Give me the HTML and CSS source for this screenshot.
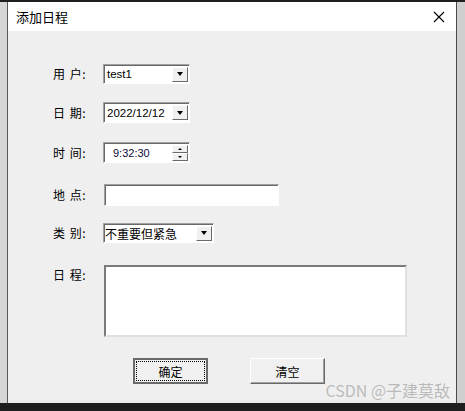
FILE: index.html
```html
<!DOCTYPE html>
<html lang="zh-CN">
<head>
    <meta charset="UTF-8">
    <title>添加日程</title>
    <link rel="stylesheet" href="styles.css">
</head>
<body>
    <div class="screen">
        <div class="side side-left"></div>

        <div class="dialog">
            <div class="titlebar">
                <span class="title">添加日程</span>
                <svg class="close" width="12" height="12" viewBox="0 0 12 12">
                    <path d="M1 1 L11 11 M11 1 L1 11" stroke="#000" stroke-width="1.1" fill="none"/>
                </svg>
            </div>

            <div class="dialog-body">
                <div class="row r-user">
                    <span class="label">用 户:</span>
                    <div class="field combo w-user">
                        <span class="value">test1</span>
                        <span class="drop"><i class="tri"></i></span>
                    </div>
                </div>

                <div class="row r-date">
                    <span class="label">日 期:</span>
                    <div class="field combo w-user">
                        <span class="value">2022/12/12</span>
                        <span class="drop"><i class="tri"></i></span>
                    </div>
                </div>

                <div class="row r-time">
                    <span class="label">时 间:</span>
                    <div class="field spin w-user">
                        <span class="value time">9:32:30</span>
                        <span class="spin-btns">
                            <span class="spin-btn"><i class="tri up"></i></span>
                            <span class="spin-btn"><i class="tri"></i></span>
                        </span>
                    </div>
                </div>

                <div class="row r-place">
                    <span class="label">地 点:</span>
                    <div class="field text w-place"></div>
                </div>

                <div class="row r-cat">
                    <span class="label">类 别:</span>
                    <div class="field combo w-cat">
                        <span class="value cjk">不重要但紧急</span>
                        <span class="drop"><i class="tri"></i></span>
                    </div>
                </div>

                <div class="row row-top r-memo">
                    <span class="label">日 程:</span>
                    <div class="field memo"></div>
                </div>

                <div class="buttons">
                    <button class="btn default"><span class="focus">确定</span></button>
                    <button class="btn">清空</button>
                </div>

                <div class="watermark">CSDN @子建莫敌</div>
            </div>
        </div>

        <div class="side side-right"></div>
    </div>
</body>
</html>
```

FILE: styles.css
```css
:root {
    --face: #f0f0f0;
    --shadow: #a0a0a0;
    --dark: #696969;
    --cjk: "Noto Sans CJK SC", "Liberation Sans", sans-serif;
}

body {
    margin: 0;
    background: #1e1e1e;
    font-family: var(--cjk);
    color: #000;
}

.screen {
    display: flex;
    height: 401px;
    margin-top: 2px;
}

.side {
    background: #d6d6d6;
}

.side-left {
    width: 7px;
}

.side-right {
    width: 8px;
    background: #cfcfcf;
    border-left: 1px solid #4a4a4a;
}

.dialog {
    width: 449px;
    border-left: 1px solid #5a5a5a;
    display: flex;
    flex-direction: column;
    background: var(--face);
}

.titlebar {
    height: 29px;
    background: #fff;
    display: flex;
    align-items: center;
    justify-content: space-between;
    padding: 0 11px 0 8px;
}

.title {
    font-size: 13px;
}

.close {
    display: block;
}

.dialog-body {
    flex: 1;
    position: relative;
    padding: 33px 0 0 45px;
    background: #efefef;
}

/* spacing between rows follows the original dialog, not a fixed rhythm */
.row {
    display: flex;
    align-items: center;
}

.r-user  { margin-bottom: 18px; }
.r-date  { margin-bottom: 19px; }
.r-time  { margin-bottom: 21px; }
.r-place { margin-bottom: 17px; }
.r-cat   { margin-bottom: 22px; }
.r-memo  { margin-bottom: 21px; }

.row-top {
    align-items: flex-start;
}

.row-top .label {
    margin-top: 1px;
}

.label {
    width: 50px;
    font-size: 12px;
    line-height: 18px;
    word-spacing: 1px;
    letter-spacing: 0.5px;
}

.field {
    box-sizing: border-box;
    background: #fff;
    border: 1px solid;
    border-color: var(--shadow) #fff #fff var(--shadow);
    box-shadow: inset 1px 1px 0 var(--dark);
    display: flex;
    align-items: center;
}

.w-user {
    width: 87px;
    height: 21px;
}

.r-user .w-user {
    height: 20px;
}

.w-place {
    width: 175px;
    height: 22px;
    margin-left: 1px;
}

.w-cat {
    width: 111px;
    height: 20px;
}

.memo {
    width: 303px;
    height: 72px;
    margin-left: 1px;
    border-width: 2px;
    border-color: #7a7a7a #e0e0e0 #e0e0e0 #7a7a7a;
    box-shadow: none;
}

.value {
    flex: 1;
    font-family: "Liberation Sans", sans-serif;
    font-size: 11.5px;
    padding-left: 3px;
    white-space: nowrap;
}

.value.time {
    padding-left: 9px;
    font-size: 11px;
    color: #0a0a3a;
}

.value.cjk {
    font-family: var(--cjk);
    font-size: 12px;
    padding-left: 1px;
}

.drop {
    width: 16px;
    height: 15px;
    margin-right: 1px;
    box-sizing: border-box;
    background: var(--face);
    border: 1px solid;
    border-color: #fff var(--dark) var(--dark) #fff;
    display: flex;
    align-items: center;
    justify-content: center;
}

.tri {
    width: 0;
    height: 0;
    border-left: 3.5px solid transparent;
    border-right: 3.5px solid transparent;
    border-top: 4px solid #000;
}

.tri.up {
    border-top: none;
    border-bottom: 2px solid #000;
    border-left-width: 2px;
    border-right-width: 2px;
}

.spin-btns {
    display: flex;
    flex-direction: column;
    margin-right: 1px;
}

.spin-btn {
    width: 16px;
    height: 8px;
    box-sizing: border-box;
    background: var(--face);
    border: 1px solid;
    border-color: #fff var(--dark) var(--dark) #fff;
    display: flex;
    align-items: center;
    justify-content: center;
}

.spin-btn .tri {
    border-left-width: 2px;
    border-right-width: 2px;
    border-top-width: 2px;
}

.buttons {
    display: flex;
    gap: 42px;
    margin-left: 80px;
}

.btn {
    width: 75px;
    height: 26px;
    box-sizing: border-box;
    background: var(--face);
    border: 1px solid;
    border-color: #fff var(--dark) var(--dark) #fff;
    box-shadow: inset -1px -1px 0 var(--shadow);
    font-family: var(--cjk);
    font-size: 12px;
    color: #000;
    padding: 0;
    display: flex;
    align-items: center;
    justify-content: center;
}

.btn.default {
    border: 2px solid #696969;
    box-shadow: none;
    padding: 1px;
}

.focus {
    box-sizing: border-box;
    width: 100%;
    height: 100%;
    border: 1px dotted #000;
    display: flex;
    align-items: center;
    justify-content: center;
}

.watermark {
    position: absolute;
    right: 6px;
    bottom: 1px;
    font-size: 16px;
    color: rgba(150, 150, 150, 0.6);
}
```
